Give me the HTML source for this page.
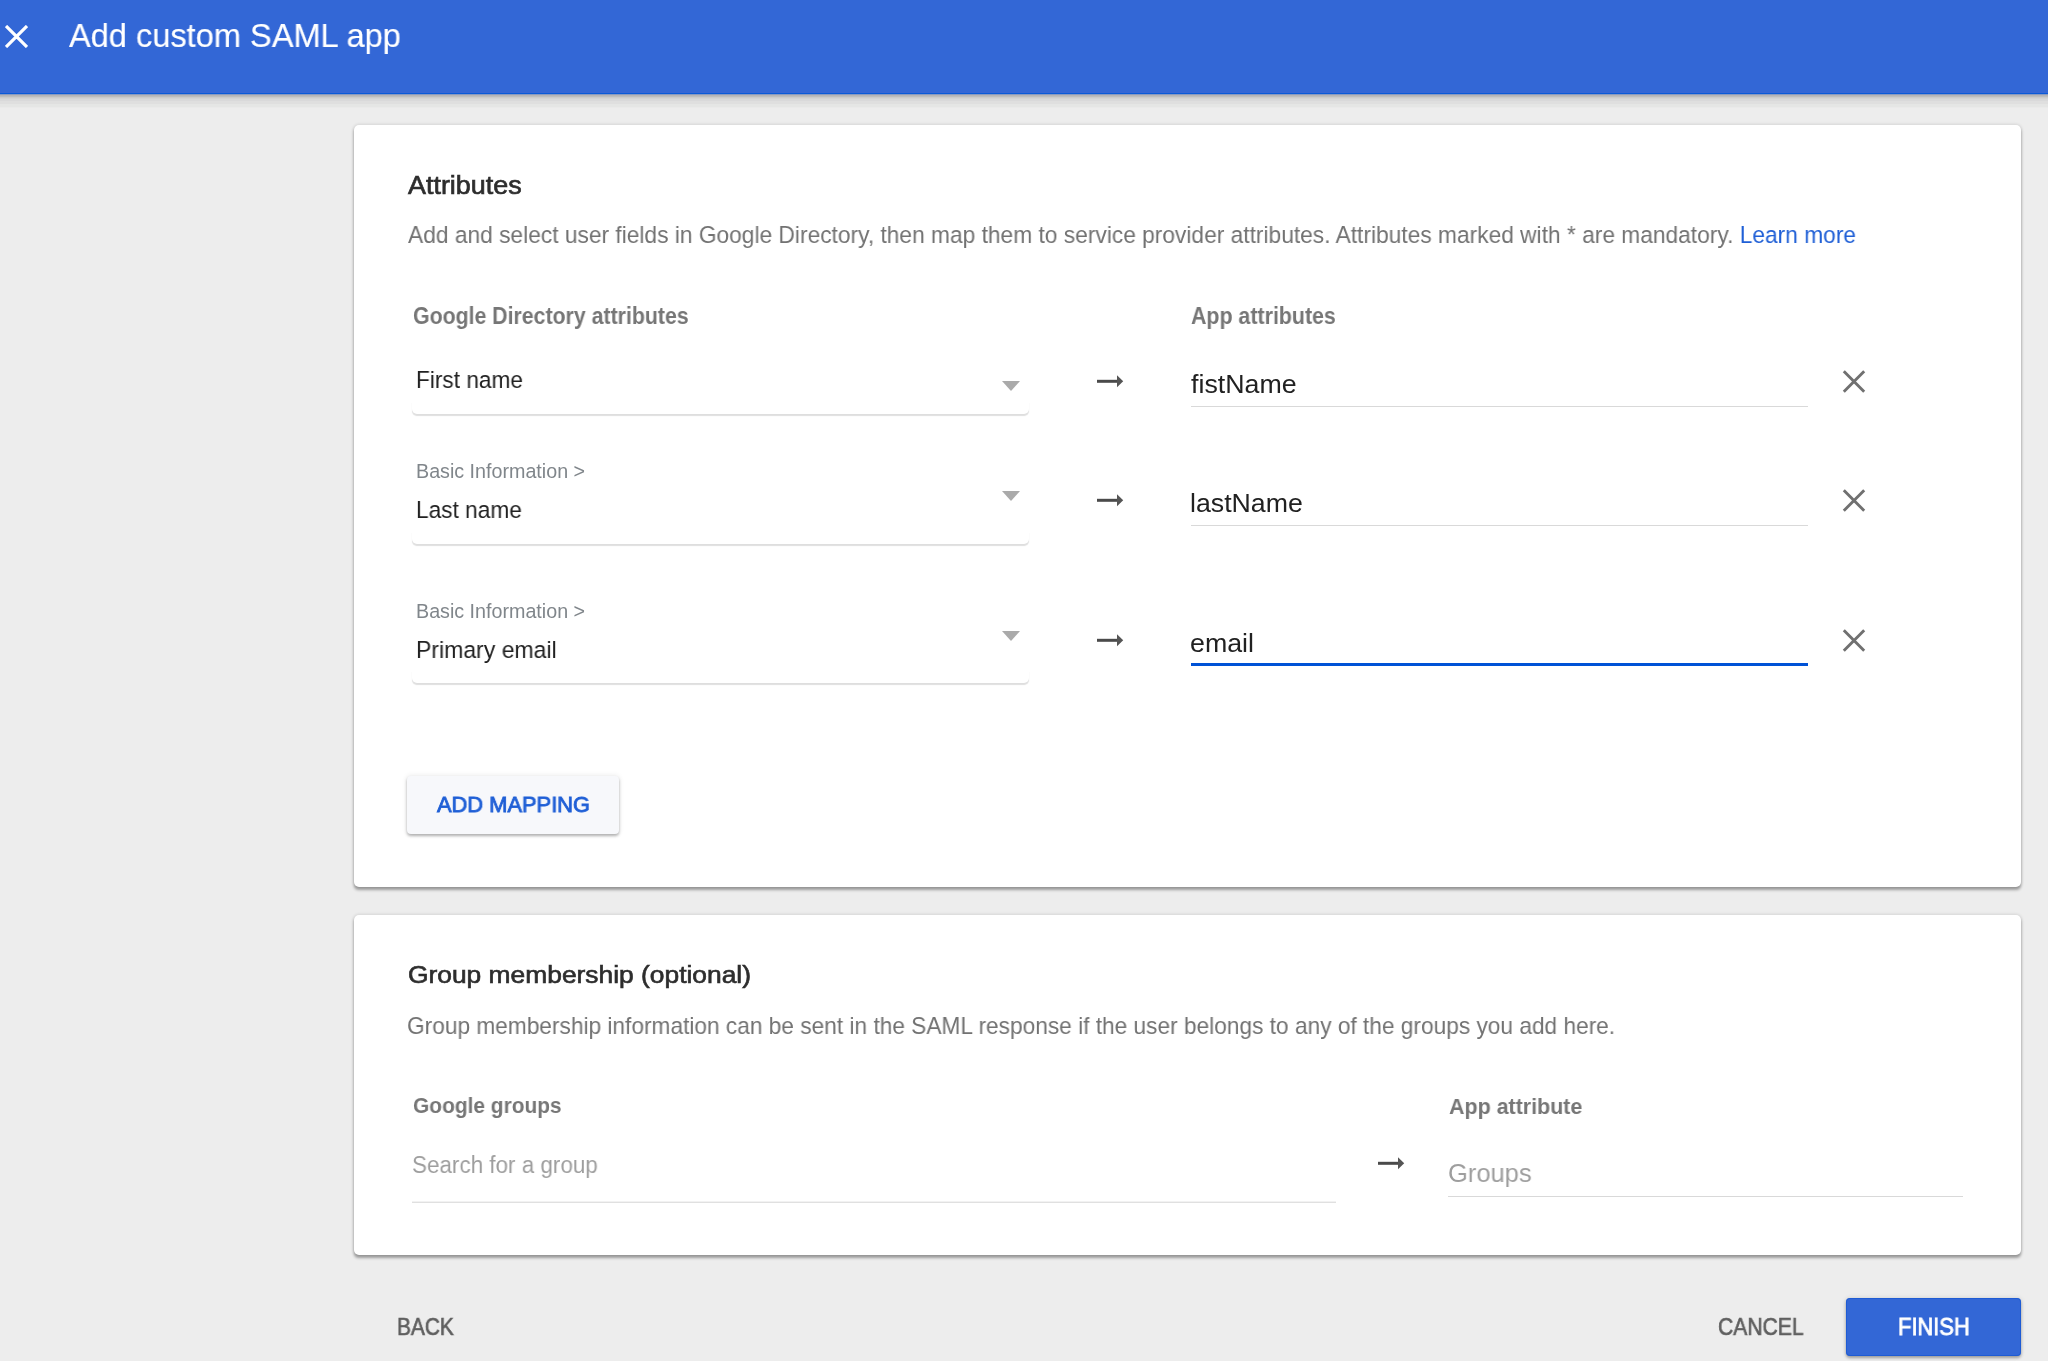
<!DOCTYPE html>
<html><head><meta charset="utf-8">
<style>
html,body{margin:0;padding:0;}
body{width:2048px;height:1361px;overflow:hidden;background:#ededed;position:relative;font-family:"Liberation Sans",sans-serif;}
.abs{position:absolute;}
.t{position:absolute;white-space:pre;line-height:0;transform-origin:0 0;will-change:transform;}
#hdr{position:absolute;left:0;top:0;width:2048px;height:108px;background:linear-gradient(to bottom,#3367d6 0px,#3367d6 92px,#3866d3 92px,#3866d3 93px,#0a5ad8 93px,#0a5ad8 94px,#8a9ac0 94px,#8a9ac0 95px,#b5b5b8 95px,#b5b5b8 96px,#bdbdbd 96px,#bdbdbd 97px,#cbcbcb 97px,#cbcbcb 98px,#d3d3d3 98px,#d3d3d3 99px,#d9d9da 99px,#d9d9da 100px,#d9d9da 100px,#d9d9da 101px,#dfdfdf 101px,#dfdfdf 102px,#dfdfdf 102px,#dfdfdf 103px,#dfdfdf 103px,#dfdfdf 104px,#e5e6e5 104px,#e5e6e5 105px,#e5e6e5 105px,#e5e6e5 106px,#e5e6e5 106px,#e5e6e5 107px,#eaeaea 107px,#eaeaea 108px,#ededed 108px);}
.card{position:absolute;left:354px;width:1667px;background:#fff;border-radius:5px;box-shadow:0 0 3px 1px rgba(0,0,0,.1),0 3px 3px -0.5px rgba(0,0,0,.32);}
.tri{position:absolute;width:0;height:0;border-left:9.5px solid transparent;border-right:9.5px solid transparent;border-top:10px solid #aaaaaa;}
</style></head>
<body>
<div id="hdr"></div>
<svg class="abs" style="left:5px;top:25px" width="23" height="23" viewBox="0 0 23 23"><path d="M1 1L22 22M22 1L1 22" stroke="#fff" stroke-width="3.2" fill="none"/></svg>
<div class="card" style="top:125px;height:762px;"></div>
<div class="card" style="top:915px;height:340px;"></div>
<div class="tri" style="left:1002px;top:381px;"></div>
<div class="abs" style="left:412px;top:402px;width:617px;height:12px;background:#fff;border-radius:0 0 5px 5px;box-shadow:0 1.5px 1px -0.3px rgba(0,0,0,.13);"></div>
<div class="abs" style="left:1191px;top:406px;width:617px;height:1px;background:#d9d9d9;"></div>
<svg class="abs" style="left:1096px;top:374px" width="28" height="14" viewBox="0 0 28 14"><path d="M1 7.3H21.5" stroke="#4a4a4a" stroke-width="3"/><path d="M21 1.3L27.2 7.3L21 13.3Z" fill="#555"/></svg>
<svg class="abs" style="left:1842px;top:369px" width="25" height="25" viewBox="0 0 25 25"><path d="M1.8 2.3L22.2 22.7M22.2 2.3L1.8 22.7" stroke="#707070" stroke-width="2.9" fill="none"/></svg>
<div class="tri" style="left:1002px;top:491px;"></div>
<div class="abs" style="left:412px;top:532px;width:617px;height:12px;background:#fff;border-radius:0 0 5px 5px;box-shadow:0 1.5px 1px -0.3px rgba(0,0,0,.13);"></div>
<div class="abs" style="left:1191px;top:525px;width:617px;height:1px;background:#d9d9d9;"></div>
<svg class="abs" style="left:1096px;top:493.2px" width="28" height="14" viewBox="0 0 28 14"><path d="M1 7.3H21.5" stroke="#4a4a4a" stroke-width="3"/><path d="M21 1.3L27.2 7.3L21 13.3Z" fill="#555"/></svg>
<svg class="abs" style="left:1842px;top:488px" width="25" height="25" viewBox="0 0 25 25"><path d="M1.8 2.3L22.2 22.7M22.2 2.3L1.8 22.7" stroke="#707070" stroke-width="2.9" fill="none"/></svg>
<div class="tri" style="left:1002px;top:631px;"></div>
<div class="abs" style="left:412px;top:671px;width:617px;height:12px;background:#fff;border-radius:0 0 5px 5px;box-shadow:0 1.5px 1px -0.3px rgba(0,0,0,.13);"></div>
<div class="abs" style="left:1191px;top:663px;width:617px;height:3px;background:#0052d6;"></div>
<svg class="abs" style="left:1096px;top:633px" width="28" height="14" viewBox="0 0 28 14"><path d="M1 7.3H21.5" stroke="#4a4a4a" stroke-width="3"/><path d="M21 1.3L27.2 7.3L21 13.3Z" fill="#555"/></svg>
<svg class="abs" style="left:1842px;top:628px" width="25" height="25" viewBox="0 0 25 25"><path d="M1.8 2.3L22.2 22.7M22.2 2.3L1.8 22.7" stroke="#707070" stroke-width="2.9" fill="none"/></svg>
<div class="abs" style="left:407px;top:776px;width:212px;height:58px;background:#f7f8fb;border-radius:4px;box-shadow:0 0 5px 1px rgba(0,0,0,.07),0 2px 3px rgba(0,0,0,.28);"></div>
<div class="abs" style="left:412px;top:1202px;width:924px;height:1px;background:#e0e0e0;box-shadow:0 -1px 0 #f2f2f2;"></div>
<svg class="abs" style="left:1377px;top:1156px" width="28" height="14" viewBox="0 0 28 14"><path d="M1 7.3H21.5" stroke="#4a4a4a" stroke-width="3"/><path d="M21 1.3L27.2 7.3L21 13.3Z" fill="#555"/></svg>
<div class="abs" style="left:1448px;top:1196px;width:515px;height:1px;background:#d9d9d9;"></div>
<div class="abs" style="left:1846px;top:1298px;width:175px;height:58px;background:#3367d6;border-radius:4px;box-shadow:inset 0 0 0 1px rgba(10,80,210,.5),0 0 4px 1px rgba(0,0,0,.08),0 2px 3px rgba(0,0,0,.3);"></div>
<div class="t" style="left:69.07px;top:34.89px;font-size:33.8px;font-weight:400;color:#fff;-webkit-text-stroke:0.15px #fff;transform:scaleX(0.9637);">Add custom SAML app</div>
<div class="t" style="left:408.35px;top:184.67px;font-size:25.2px;font-weight:400;color:#2d2d2d;-webkit-text-stroke:0.65px #2d2d2d;transform:scaleX(1.0681);">Attributes</div>
<div class="t" style="left:408.00px;top:234.92px;font-size:23.9px;font-weight:400;color:#727272;transform:scaleX(0.9521);">Add and select user fields in Google Directory, then map them to service provider attributes. Attributes marked with * are mandatory. <span style="color:#1f5fd6">Learn more</span></div>
<div class="t" style="left:413.20px;top:315.83px;font-size:23.0px;font-weight:700;color:#767676;transform:scaleX(0.9256);">Google Directory attributes</div>
<div class="t" style="left:1191.40px;top:315.53px;font-size:23.0px;font-weight:700;color:#767676;transform:scaleX(0.9291);">App attributes</div>
<div class="t" style="left:415.84px;top:380.19px;font-size:23.7px;font-weight:400;color:#212121;transform:scaleX(0.9557);">First name</div>
<div class="t" style="left:1191.00px;top:383.95px;font-size:26.4px;font-weight:400;color:#212121;transform:scaleX(1.0151);">fistName</div>
<div class="t" style="left:415.60px;top:471.17px;font-size:19.7px;font-weight:400;color:#80868b;transform:scaleX(0.9996);">Basic Information &gt;</div>
<div class="t" style="left:415.84px;top:509.69px;font-size:23.7px;font-weight:400;color:#212121;transform:scaleX(0.9567);">Last name</div>
<div class="t" style="left:1189.99px;top:503.15px;font-size:26.4px;font-weight:400;color:#212121;transform:scaleX(1.0120);">lastName</div>
<div class="t" style="left:415.60px;top:611.17px;font-size:19.7px;font-weight:400;color:#80868b;transform:scaleX(0.9996);">Basic Information &gt;</div>
<div class="t" style="left:415.83px;top:649.69px;font-size:23.7px;font-weight:400;color:#212121;transform:scaleX(0.9719);">Primary email</div>
<div class="t" style="left:1189.99px;top:642.95px;font-size:26.4px;font-weight:400;color:#212121;transform:scaleX(1.0147);">email</div>
<div class="t" style="left:437.42px;top:805.01px;font-size:22.2px;font-weight:400;color:#1f5fd6;-webkit-text-stroke:0.85px #1f5fd6;transform:scaleX(0.9850);">ADD MAPPING</div>
<div class="t" style="left:407.78px;top:974.68px;font-size:24.6px;font-weight:400;color:#2d2d2d;-webkit-text-stroke:0.65px #2d2d2d;transform:scaleX(1.0722);">Group membership (optional)</div>
<div class="t" style="left:407.05px;top:1025.55px;font-size:23.8px;font-weight:400;color:#727272;transform:scaleX(0.9530);">Group membership information can be sent in the SAML response if the user belongs to any of the groups you add here.</div>
<div class="t" style="left:413.20px;top:1105.57px;font-size:22.6px;font-weight:700;color:#767676;transform:scaleX(0.9251);">Google groups</div>
<div class="t" style="left:1448.60px;top:1106.10px;font-size:22.8px;font-weight:700;color:#767676;transform:scaleX(0.9394);">App attribute</div>
<div class="t" style="left:412.25px;top:1164.86px;font-size:23.5px;font-weight:400;color:#9e9e9e;transform:scaleX(0.9547);">Search for a group</div>
<div class="t" style="left:1448.01px;top:1173.06px;font-size:25.8px;font-weight:400;color:#9e9e9e;transform:scaleX(0.9892);">Groups</div>
<div class="t" style="left:396.79px;top:1326.56px;font-size:23.2px;font-weight:400;color:#5f5f5f;-webkit-text-stroke:0.65px #5f5f5f;transform:scaleX(0.8985);">BACK</div>
<div class="t" style="left:1717.69px;top:1326.96px;font-size:23.2px;font-weight:400;color:#5f5f5f;-webkit-text-stroke:0.65px #5f5f5f;transform:scaleX(0.9092);">CANCEL</div>
<div class="t" style="left:1897.83px;top:1326.96px;font-size:23.2px;font-weight:400;color:#fff;-webkit-text-stroke:0.8px #fff;transform:scaleX(0.9438);z-index:5;">FINISH</div>
</body></html>
